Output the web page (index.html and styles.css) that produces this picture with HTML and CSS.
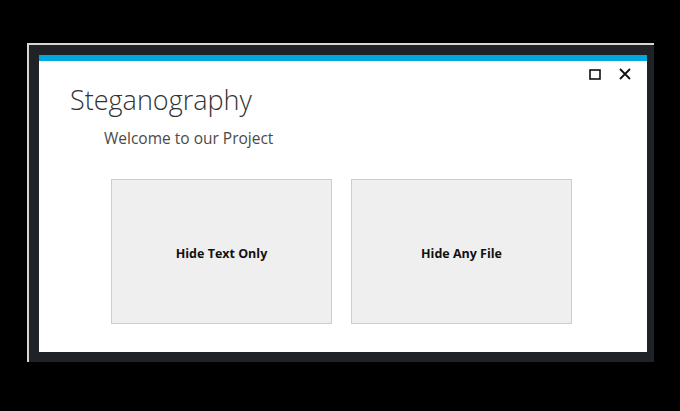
FILE: index.html
```html
<!DOCTYPE html>
<html>
<head>
<meta charset="utf-8">
<link rel="stylesheet" href="styles.css">
</head>
<body>
<div class="frame">
  <div class="window">
    <div class="titlebar">
      <span class="ctl ctl-max"><svg width="12" height="11" viewBox="0 0 12 11"><rect x="1" y="1" width="10" height="9" fill="none" stroke="#111" stroke-width="1.6"/></svg></span>
      <span class="ctl ctl-close"><svg width="12" height="12" viewBox="0 0 12 12"><path d="M1 1 L11 11 M11 1 L1 11" stroke="#111" stroke-width="1.8" fill="none"/></svg></span>
    </div>
    <h1 class="title">Steganography</h1>
    <p class="subtitle">Welcome to our Project</p>
    <div class="buttons">
      <div class="btn">Hide Text Only</div>
      <div class="btn">Hide Any File</div>
    </div>
  </div>
</div>
</body>
</html>
```
FILE: styles.css
```css
html, body {
  margin: 0;
  padding: 0;
  background: #000;
  width: 680px;
  height: 411px;
  overflow: hidden;
}
.frame {
  margin: 43px 0 0 27px;
  width: 608px;
  height: 297px;
  border-top: 2px solid #d6d6d6;
  border-left: 2px solid #d6d6d6;
  background: #1f2327;
  padding: 10px 7px 10px 10px;
}
.window {
  width: 608px;
  height: 291px;
  background: #fff;
  border-top: 6px solid #00a9db;
  font-family: "Open Sans", "Noto Sans", sans-serif;
}
.titlebar {
  display: flex;
  justify-content: flex-end;
  align-items: center;
  gap: 18px;
  height: 12px;
  padding: 7px 16px 0 0;
}
.ctl { display: flex; }
.title {
  margin: 3px 0 0 31px;
  font-weight: 300;
  font-size: 27px;
  line-height: 34px;
  color: #333;
}
.subtitle {
  margin: 11px 0 0 65px;
  font-size: 15.5px;
  font-weight: 400;
  color: #4a4a4a;
  line-height: 20px;
}
.buttons {
  display: flex;
  gap: 19px;
  margin: 31px 0 0 72px;
}
.btn {
  box-sizing: border-box;
  width: 221px;
  height: 145px;
  padding-top: 3px;
  background: #efefef;
  border: 1px solid #cdcdcd;
  display: flex;
  align-items: center;
  justify-content: center;
  font-weight: 700;
  font-size: 12.5px;
  color: #111;
}
```
